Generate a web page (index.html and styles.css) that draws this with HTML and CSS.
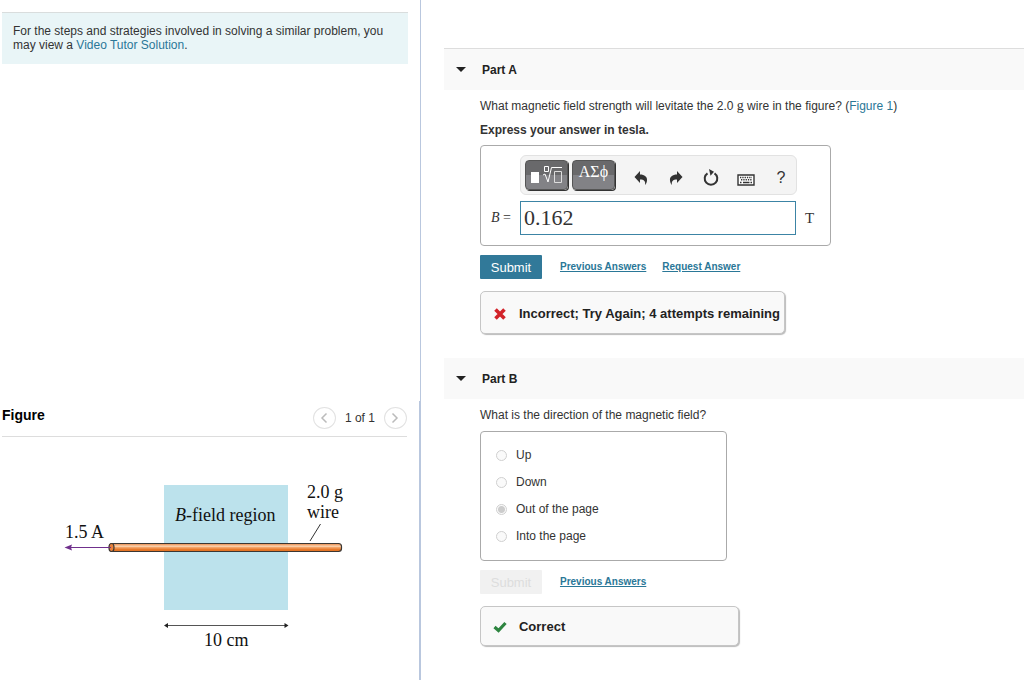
FILE: index.html
```
<!DOCTYPE html>
<html lang="en">
  <head>
    <meta charset="utf-8">
    <title>Levitating wire</title>
    <link rel="stylesheet" href="styles.css">
  </head>
  <body>
    <div class="page">
      <div class="left">
        <div class="intro">
          <p class="hint">For the steps and strategies involved in solving a similar problem, you may view a <a href="#">Video Tutor Solution</a>.</p>
        </div>
        <div class="figure" id="figure1">
          <div class="figure-head">
            <h2>Figure</h2>
            <div class="pager">
              <button type="button" aria-label="Previous figure">
                <svg width="8" height="12" viewBox="0 0 8 12"><path d="M6.5 1.5L2 6l4.500 4.500"/></svg>
              </button>
              <span>1 of 1</span>
              <button type="button" aria-label="Next figure">
                <svg width="8" height="12" viewBox="0 0 8 12"><path d="M1.500 1.500L6 6l-4.500 4.500"/></svg>
              </button>
            </div>
          </div>
          <svg class="drawing" width="360" height="220" viewBox="0 0 360 220">
            <defs>
              <linearGradient id="copper" x1="0" y1="0" x2="0" y2="1">
                <stop offset="0" stop-color="#e8833f"/>
                <stop offset="0.35" stop-color="#fbd3b0"/>
                <stop offset="0.5" stop-color="#f4a468"/>
                <stop offset="0.75" stop-color="#e87a2c"/>
                <stop offset="1" stop-color="#e0701f"/>
              </linearGradient>
            </defs>
            <!-- field region -->
            <rect x="162" y="48" width="124" height="125" fill="#bce2ec"/>
            <text x="173" y="84"><tspan font-style="italic">B</tspan>-field region</text>
            <!-- wire -->
            <rect x="107.500" y="106.500" width="232" height="8" rx="3" fill="url(#copper)" stroke="#3b3733" stroke-width="1.200"/>
            <ellipse cx="109.500" cy="110.500" rx="2.500" ry="4" fill="#e8813b" stroke="#3b3733" stroke-width="1.200"/>
            <text x="305" y="61">2.0 g</text>
            <text x="305" y="81">wire</text>
            <path d="M318.500 87L308 104" stroke="#333"/>
            <!-- current -->
            <text x="63" y="101">1.5 A</text>
            <path d="M68 110.500H109" stroke="#70308c" stroke-width="1.200"/>
            <path d="M62.500 110.500l7.500-3-1 3 1 3z" fill="#70308c"/>
            <!-- width -->
            <path d="M164 188.500H284" stroke="#555"/>
            <path d="M162 188.500l4-2.500v5zM286.500 188.500l-4-2.500v5z" fill="#222"/>
            <text x="202" y="209">10 cm</text>
          </svg>
        </div>
      </div>

      <div class="right">
        <section class="part part-a">
          <h2><span class="arrow"></span>Part A</h2>
          <div class="body">
            <p>What magnetic field strength will levitate the 2.0 <span class="unit">g</span> wire in the figure? (<a href="#figure1">Figure 1</a>)</p>
            <p class="express">Express your answer in tesla.</p>
            <div class="answer">
              <div class="toolbar">
                <button type="button" class="dark" aria-label="Templates">
                  <svg width="34" height="24" viewBox="0 0 34 24" fill="none" stroke="#fff">
                    <path d="M2 9h8v11H2z" fill="#fff" stroke="none"/>
                    <path d="M15.500 3.500h4v5h-4zM14 12l2-1 3 8 3.500-14.500H33"/>
                    <path d="M25.500 8.500h7v11h-7z" stroke="#ddd"/>
                  </svg>
                </button>
                <button type="button" class="dark greek">ΑΣϕ</button>
                <button type="button" class="tool" aria-label="Undo">
                  <svg width="14" height="14" viewBox="0 0 14 14"><path d="M6 0v3.500c4.500 0 7.500 2.500 7 6-.2 2-1 3.500-2 4.500.8-3.500-.8-5.500-5-5.500V12L.5 6z"/></svg>
                </button>
                <button type="button" class="tool" aria-label="Redo">
                  <svg width="14" height="14" viewBox="0 0 14 14"><path d="M8 0v3.500c-4.500 0-7.500 2.500-7 6 .2 2 1 3.500 2 4.500-.8-3.500.8-5.500 5-5.500V12l5.500-6z"/></svg>
                </button>
                <button type="button" class="tool" aria-label="Reset">
                  <svg width="16" height="18" viewBox="0 0 16 18"><path d="M4.500 4.300A6.300 6.300 0 1 0 11.500 4.300" fill="none" stroke="#333" stroke-width="2"/><path d="M6 0l5 2.800-3.500 4z"/></svg>
                </button>
                <button type="button" class="tool" aria-label="Keyboard">
                  <svg class="keys" width="18" height="12" viewBox="0 0 18 12"><path d="M1 1h16v10H1z" fill="#fff" stroke="#333" stroke-width="1.400"/><path d="M3 3.500h12M4 5.800h11" stroke="#333" stroke-width="1.400" stroke-dasharray="1.300 1"/><path d="M3 8.500h1.500M6 8.500h6.500M13.500 8.500H15" stroke="#333" stroke-width="1.400"/></svg>
                </button>
                <button type="button" class="tool help">?</button>
              </div>
              <label for="field" class="var"><i>B</i> =</label>
              <input id="field" type="text" value="0.162">
              <span class="tesla">T</span>
            </div>
            <div class="actions">
              <button type="button" class="submit">Submit</button>
              <a href="#">Previous Answers</a>
              <a href="#">Request Answer</a>
            </div>
            <div class="feedback wrong">
              <svg width="14" height="14" viewBox="0 0 14 14"><path d="M2.500 2.500l9 9M11.500 2.500l-9 9" stroke="#d2232a" stroke-width="3.600"/></svg>
              Incorrect; Try Again; 4 attempts remaining
            </div>
          </div>
        </section>

        <section class="part part-b">
          <h2><span class="arrow"></span>Part B</h2>
          <div class="body">
            <p>What is the direction of the magnetic field?</p>
            <div class="choices">
              <label><input type="radio" name="direction" disabled>Up</label>
              <label><input type="radio" name="direction" disabled>Down</label>
              <label><input type="radio" name="direction" disabled checked>Out of the page</label>
              <label><input type="radio" name="direction" disabled>Into the page</label>
            </div>
            <div class="actions">
              <button type="button" class="submit" disabled>Submit</button>
              <a href="#">Previous Answers</a>
            </div>
            <div class="feedback right-answer">
              <svg width="14" height="12" viewBox="0 0 14 12"><path d="M1.500 6l4 3.500L12.500 2" fill="none" stroke="#2e8540" stroke-width="3.200"/></svg>
              Correct
            </div>
          </div>
        </section>
      </div>
    </div>
  </body>
</html>
```
FILE: styles.css
```
* {
  box-sizing: border-box;
}
body {
  margin: 0;
  font-family: "Liberation Sans", Arial, sans-serif;
  font-size: 12px;
  line-height: 14px;
  color: #333;
  background: #fff;
}
h2, p {
  margin: 0;
}
a {
  color: #2a7797;
  text-decoration: none;
}
button {
  font-family: inherit;
  padding: 0;
  border: 0;
}
.page {
  display: grid;
  grid-template-columns: 37fr 53fr;
  min-height: 100vh;
}

/* left pane */
.left {
  display: flex;
  flex-direction: column;
}
.intro {
  flex: 1;
  padding: 12px 12px 0 2px;
  border-right: 1px solid #b9c7de;
}
.hint {
  padding: 11px 16px 12px 11px;
  border-top: 1px solid #d9dddd;
  background: #e9f5f7;
}
.figure {
  padding: 0 12px 23px 2px;
  border-right: 2px solid #b9c7de;
}
.figure-head {
  display: flex;
  justify-content: space-between;
  align-items: center;
  height: 36px;
  border-bottom: 1px solid #ddd;
}
.figure-head h2 {
  font-size: 14px;
  color: #000;
  padding-bottom: 8px;
}
.pager {
  display: flex;
  align-items: center;
  gap: 9px;
  padding-bottom: 2px;
}
.pager button {
  display: flex;
  align-items: center;
  justify-content: center;
  width: 23px;
  height: 22px;
  border: 1px solid #e2e2e2;
  border-radius: 50%;
  background: #fff;
}
.pager path {
  fill: none;
  stroke: #bbb;
  stroke-width: 1.5;
}
.drawing {
  display: block;
}
.drawing text {
  font-family: "Liberation Serif", "Times New Roman", serif;
  font-size: 18px;
  fill: #111;
}

/* right pane */
.right {
  padding: 48px 0 24px 23px;
}
.part h2 {
  display: flex;
  align-items: center;
  height: 41px;
  padding-left: 12px;
  font-size: 12px;
  color: #222;
  background: #f9f9f9;
}
.part-a h2 {
  height: 42px;
  border-top: 1px solid #ddd;
}
.part-b {
  margin-top: 24px;
}
.arrow {
  width: 10px;
  margin-right: 16px;
  border: 5px solid transparent;
  border-top-color: #222;
  border-bottom: 0;
}
.body {
  padding: 9px 24px 0 36px;
}
.unit {
  font-family: "Liberation Serif", serif;
  font-size: 14px;
  line-height: 12px;
}
.express {
  margin-top: 10px;
  font-weight: bold;
}
.answer {
  display: grid;
  grid-template-columns: 39px 277px 1fr;
  align-items: center;
  row-gap: 6px;
  width: 351px;
  margin-top: 8px;
  padding: 9px 0 10px;
  border: 1px solid #aaa;
  border-radius: 4px;
}
.toolbar {
  grid-column: 2;
  display: flex;
  align-items: center;
  height: 40px;
  padding-left: 4px;
  border: 1px solid #e2e2e2;
  border-radius: 6px;
  background: #f4f4f4;
}
.dark {
  display: flex;
  flex: none;
  align-items: center;
  justify-content: center;
  width: 43px;
  height: 30px;
  margin-right: 4px;
  border: 1px solid #555;
  border-radius: 4px;
  color: #fff;
  background: linear-gradient(#69696b 0 50%, #828286 50% 100%);
  box-shadow: 1px 1px 0 #333;
}
.greek {
  padding-bottom: 6px;
  font-family: "Liberation Serif", serif;
  font-size: 16px;
}
.tool {
  display: flex;
  flex: none;
  align-items: center;
  justify-content: center;
  width: 35px;
  height: 32px;
  padding-top: 6px;
  color: #333;
  background: none;
  fill: #333;
}
.dark + .tool {
  margin-left: 5px;
}
.keys {
  margin-top: 4px;
}
.help {
  width: 30px;
  padding-left: 4px;
  font-size: 16px;
}
.var {
  grid-column: 1;
  padding-left: 10px;
  font-size: 14px;
  font-family: "Liberation Serif", serif;
}
#field {
  width: 276px;
  height: 34px;
  padding: 0 3px;
  border: 1px solid #3c84a5;
  font-family: "Liberation Serif", "Times New Roman", serif;
  font-size: 22px;
  color: #333;
}
.tesla {
  padding-left: 8px;
  font-family: "Liberation Serif", serif;
  font-size: 15px;
}
.actions {
  display: flex;
  align-items: center;
  margin-top: 9px;
}
.actions a {
  margin-right: 16px;
  font-size: 10px;
  font-weight: bold;
  text-decoration: underline;
}
.submit {
  width: 62px;
  height: 24px;
  margin-right: 18px;
  border-radius: 1px;
  font-size: 13px;
  color: #fff;
  background: #317999;
}
.submit:disabled {
  color: #ddd;
  background: #f1f1f1;
}
.feedback {
  display: flex;
  align-items: center;
  gap: 12px;
  width: 305px;
  height: 43px;
  margin-top: 12px;
  padding: 3px 0 0 12px;
  border: 1px solid #c6c6c6;
  border-radius: 5px;
  font-size: 13px;
  font-weight: bold;
  white-space: nowrap;
  color: #222;
  background: #f9f9f9;
  box-shadow: 1px 1px 1px #bbb;
}
.right-answer {
  width: 259px;
  height: 40px;
  padding-top: 1px;
}
.choices {
  display: grid;
  gap: 13px;
  width: 247px;
  margin-top: 9px;
  padding: 16px 14px 17px 15px;
  border: 1px solid #aaa;
  border-radius: 4px;
}
.choices label {
  display: flex;
  align-items: center;
}
.choices input {
  appearance: none;
  width: 11px;
  height: 11px;
  margin: 0 9px 0 0;
  border: 1px solid #d0d0d0;
  border-radius: 50%;
  background: #fafafa;
}
.choices input:checked {
  background: radial-gradient(circle, #ccc 3px, #fafafa 4px);
}
```
